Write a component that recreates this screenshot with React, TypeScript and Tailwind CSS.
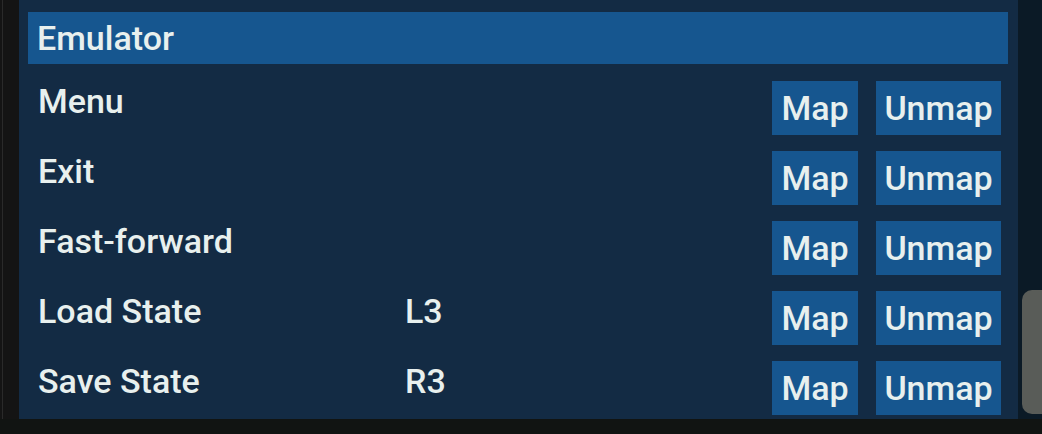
import React from "react";

const rows = [
  { label: "Menu", value: "" },
  { label: "Exit", value: "" },
  { label: "Fast-forward", value: "" },
  { label: "Load State", value: "L3" },
  { label: "Save State", value: "R3" },
];

export default function App() {
  return (
    <div
      className="flex h-[434px] w-[1042px] flex-col overflow-hidden bg-[#111412] text-[#e8f0ee]"
      style={{ fontFamily: "Roboto, 'Noto Sans', sans-serif" }}
    >
      <div className="flex h-[419px] shrink-0 overflow-hidden">
        <div className="flex w-[19px] shrink-0 bg-[#141414]">
          <div className="ml-[2px] w-[1px] bg-[#2a2a2a]" />
        </div>
        <div className="flex w-[999px] shrink-0 flex-col overflow-hidden bg-[#132b44]">
          <div className="ml-[9px] mr-[10px] mt-[12px] flex h-[52px] shrink-0 items-center bg-[#16568f] pl-[9px] text-[34px] font-medium leading-[34px]">
            Emulator
          </div>
          <div className="mt-[17px] flex shrink-0 flex-col">
            {rows.map((r) => (
              <div key={r.label} className="flex h-[70px] shrink-0 items-start pl-[19px]">
                <div className="mt-[3px] w-[367px] shrink-0 text-[34px] font-medium leading-[34px]">{r.label}</div>
                <div className="mt-[3px] flex-1 text-[34px] font-medium leading-[34px]">{r.value}</div>
                <div className="flex h-[54px] w-[86px] shrink-0 items-center justify-center bg-[#16568f] text-[34px] font-medium leading-[34px]">
                  Map
                </div>
                <div className="ml-[18px] mr-[17px] flex h-[54px] w-[125px] shrink-0 items-center justify-center bg-[#16568f] text-[34px] font-medium leading-[34px]">
                  Unmap
                </div>
              </div>
            ))}
          </div>
        </div>
        <div className="flex min-w-0 flex-1 flex-col bg-[#0b1a26] pl-[4px] pt-[290px]">
          <div className="h-[124px] w-[20px] shrink-0 rounded-l-[10px] bg-[#595c58]" />
        </div>
      </div>
      <div className="flex-1 bg-[#111412]" />
    </div>
  );
}
